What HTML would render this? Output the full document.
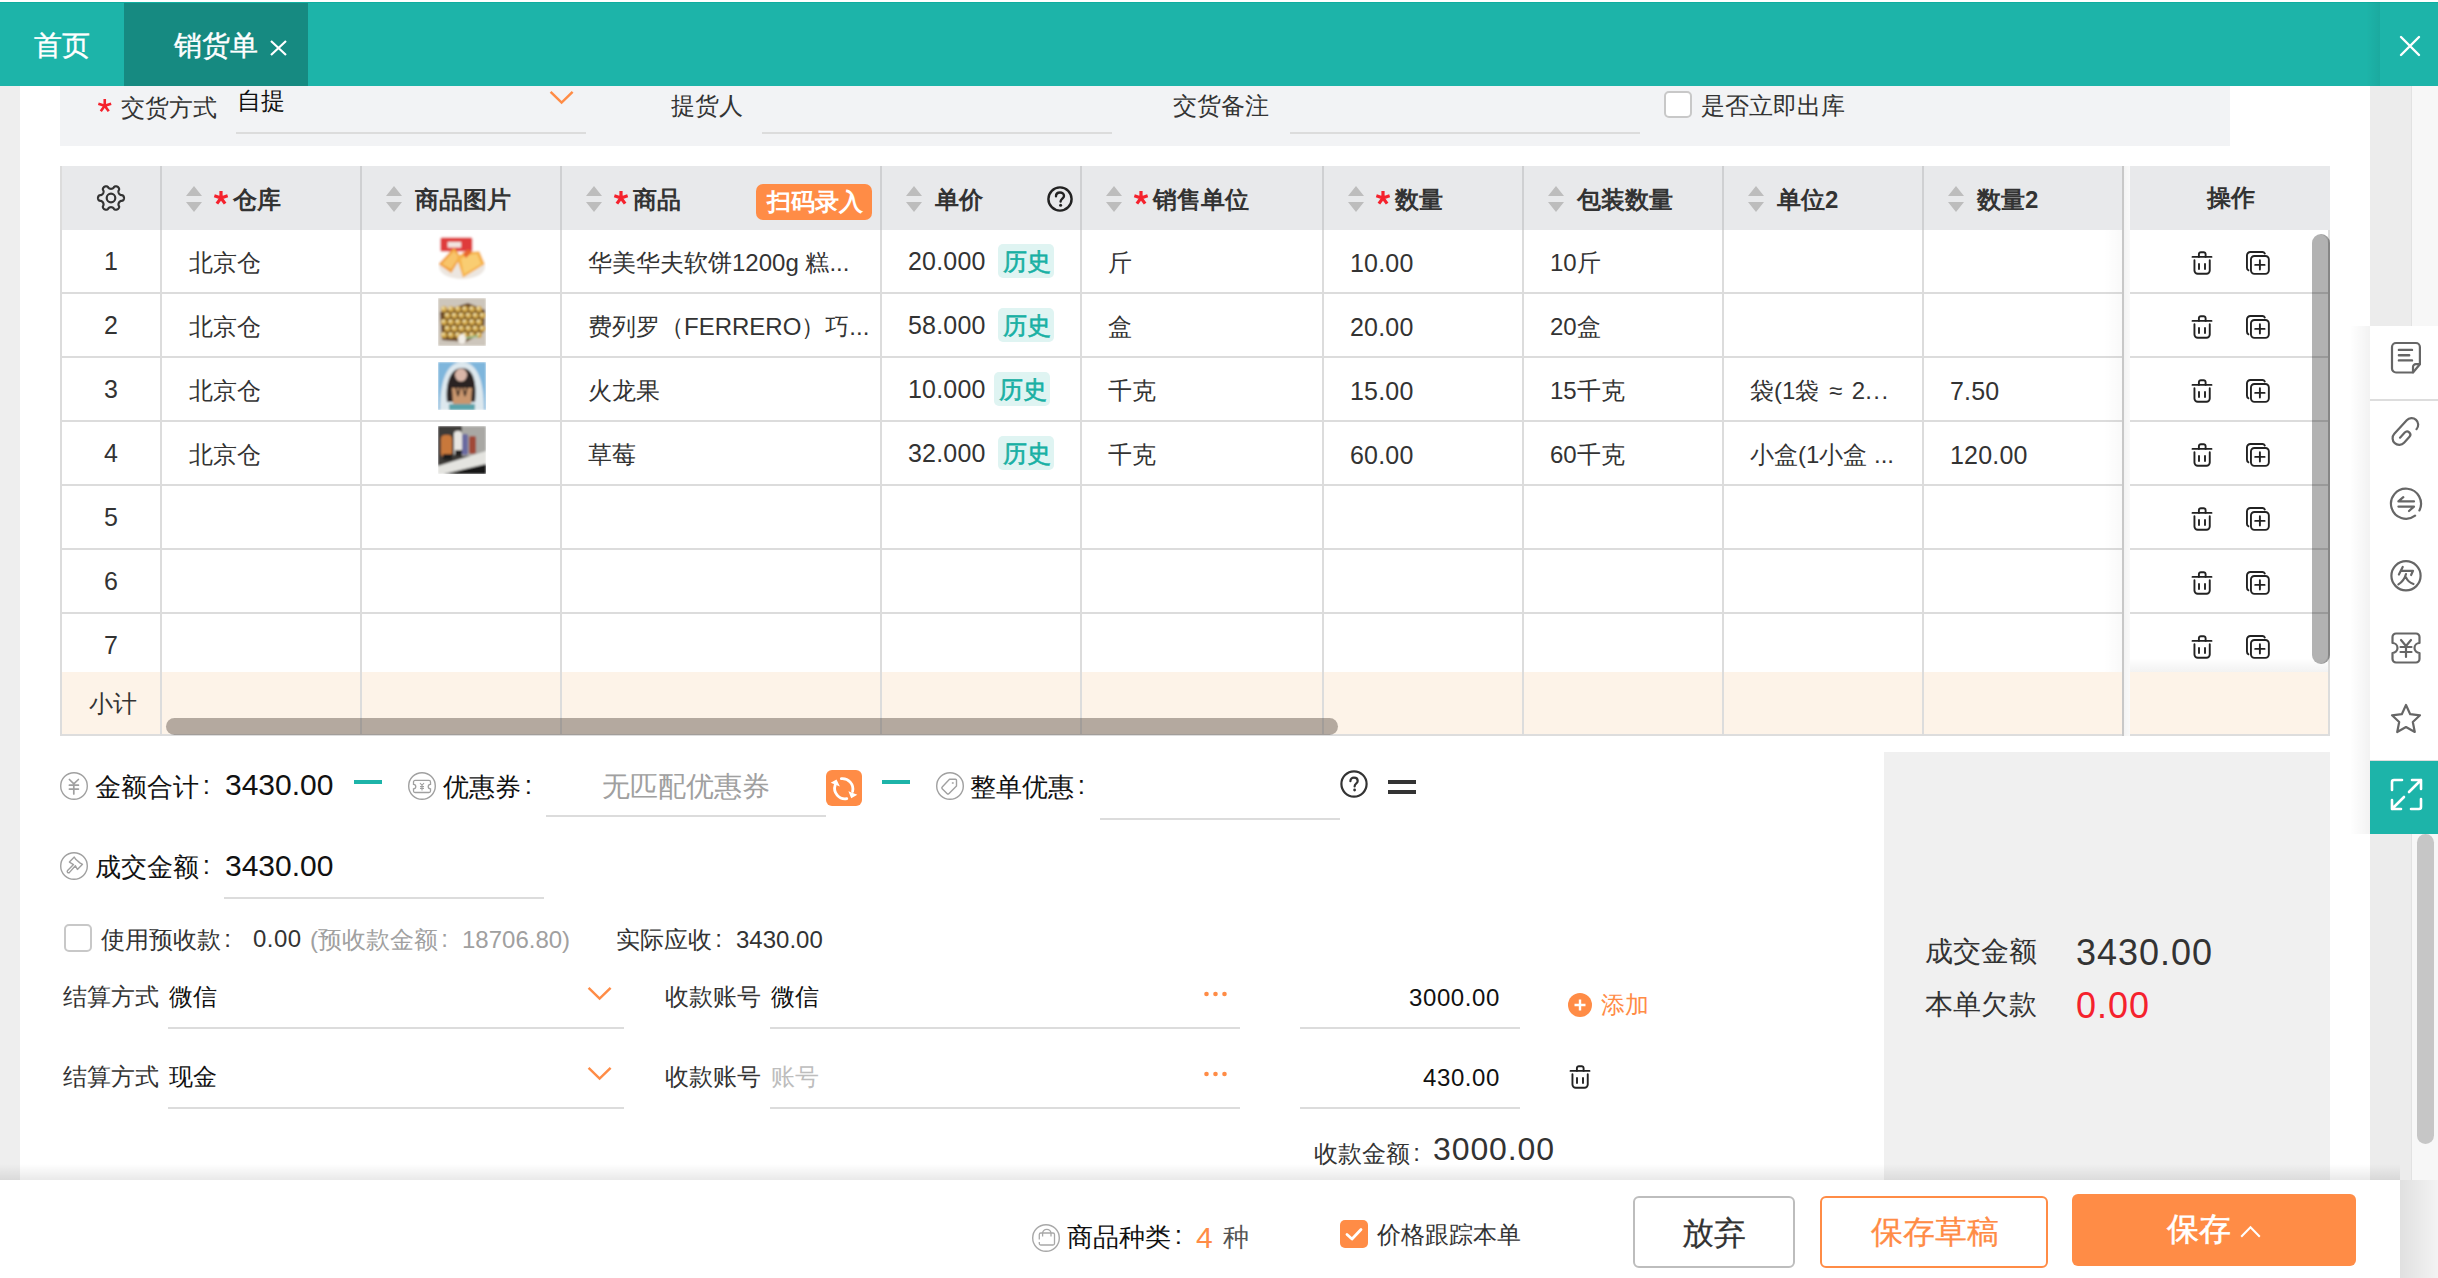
<!DOCTYPE html>
<html><head><meta charset="utf-8"><style>*{box-sizing:border-box;margin:0;padding:0}
html,body{width:2438px;height:1278px;overflow:hidden;background:#fff;font-family:"Liberation Sans",sans-serif;color:#333}
.a{position:absolute;white-space:nowrap}
svg.a{overflow:visible}
.cl{display:inline-block;width:1em;padding-left:0.14em;position:relative;top:-0.06em}
</style></head><body>
<div class="a" style="left:0px;top:0px;width:2438px;height:2px;background:#fff"></div>
<div class="a" style="left:0px;top:2px;width:2438px;height:1px;background:#0fae9f"></div>
<div class="a" style="left:0px;top:3px;width:2438px;height:83px;background:#1db4a9"></div>
<div class="a" style="left:124px;top:3px;width:184px;height:83px;background:#168a81"></div>
<div class="a" style="left:34px;top:32px;font-size:28px;line-height:28px;color:#fff;-webkit-text-stroke:0.4px #fff">首页</div>
<div class="a" style="left:174px;top:32px;font-size:28px;line-height:28px;color:#fff;-webkit-text-stroke:0.4px #fff">销货单</div>
<svg class="a" style="left:270px;top:40px;" width="17" height="16" viewBox="0 0 17 16"><path d="M1 1L16 15M16 1L1 15" stroke="#fff" stroke-width="2.2" fill="none"/></svg>
<div class="a" style="left:2366px;top:2px;width:14px;height:84px;background:linear-gradient(90deg,rgba(0,0,0,0),rgba(0,0,0,0.06))"></div>
<svg class="a" style="left:2400px;top:36px;" width="20" height="20" viewBox="0 0 20 20"><path d="M1 1L19 19M19 1L1 19" stroke="#fff" stroke-width="2.4" fill="none" stroke-linecap="round"/></svg>
<div class="a" style="left:0px;top:86px;width:20px;height:1192px;background:#eeeeee"></div>
<div class="a" style="left:60px;top:86px;width:2170px;height:60px;background:#f2f3f5"></div>
<svg class="a" style="left:98px;top:99px;" width="13.5" height="13.5" viewBox="0 0 13.5 13.5"><path d="M6.75 6.75L6.75 0.00M6.75 6.75L13.17 4.66M6.75 6.75L10.72 12.21M6.75 6.75L2.78 12.21M6.75 6.75L0.33 4.66" stroke="#f5222d" stroke-width="2.6" stroke-linecap="butt"/></svg>
<div class="a" style="left:121px;top:96px;font-size:24px;line-height:24px;color:#333">交货方式</div>
<div class="a" style="left:237px;top:89px;font-size:24px;line-height:24px;color:#111">自提</div>
<div class="a" style="left:236px;top:132px;width:350px;height:2px;background:#dcdcdc"></div>
<svg class="a" style="left:549px;top:90px;" width="26" height="15" viewBox="0 0 26 15"><path d="M1.6 1.8L12.6 12.6L23.6 1.8" stroke="#ff8c46" stroke-width="2.5" fill="none"/></svg>
<div class="a" style="left:671px;top:94px;font-size:24px;line-height:24px;color:#333">提货人</div>
<div class="a" style="left:762px;top:132px;width:350px;height:2px;background:#dcdcdc"></div>
<div class="a" style="left:1173px;top:94px;font-size:24px;line-height:24px;color:#333">交货备注</div>
<div class="a" style="left:1290px;top:132px;width:350px;height:2px;background:#dcdcdc"></div>
<div class="a" style="left:1664px;top:91px;width:28px;height:27px;background:#fff;border:2px solid #c8c8c8;border-radius:5px"></div>
<div class="a" style="left:1701px;top:94px;font-size:24px;line-height:24px;color:#333">是否立即出库</div>
<div class="a" style="left:60px;top:166px;width:2270px;height:64px;background:#e8e9eb"></div>
<div class="a" style="left:60px;top:230px;width:2270px;height:442px;background:#fff"></div>
<div class="a" style="left:60px;top:672px;width:2270px;height:62px;background:#fdf3e8"></div>
<div class="a" style="left:60px;top:734px;width:2270px;height:2px;background:#dddddd"></div>
<div class="a" style="left:60px;top:166px;width:2px;height:570px;background:#dcdcdc"></div>
<div class="a" style="left:2328px;top:230px;width:2px;height:506px;background:#dcdcdc"></div>
<div class="a" style="left:62px;top:292px;width:2060px;height:2px;background:#dcdcdc"></div>
<div class="a" style="left:2130px;top:292px;width:200px;height:2px;background:#dcdcdc"></div>
<div class="a" style="left:62px;top:356px;width:2060px;height:2px;background:#dcdcdc"></div>
<div class="a" style="left:2130px;top:356px;width:200px;height:2px;background:#dcdcdc"></div>
<div class="a" style="left:62px;top:420px;width:2060px;height:2px;background:#dcdcdc"></div>
<div class="a" style="left:2130px;top:420px;width:200px;height:2px;background:#dcdcdc"></div>
<div class="a" style="left:62px;top:484px;width:2060px;height:2px;background:#dcdcdc"></div>
<div class="a" style="left:2130px;top:484px;width:200px;height:2px;background:#dcdcdc"></div>
<div class="a" style="left:62px;top:548px;width:2060px;height:2px;background:#dcdcdc"></div>
<div class="a" style="left:2130px;top:548px;width:200px;height:2px;background:#dcdcdc"></div>
<div class="a" style="left:62px;top:612px;width:2060px;height:2px;background:#dcdcdc"></div>
<div class="a" style="left:2130px;top:612px;width:200px;height:2px;background:#dcdcdc"></div>
<div class="a" style="left:160px;top:166px;width:2px;height:64px;background:#cfd0d2"></div>
<div class="a" style="left:160px;top:230px;width:2px;height:506px;background:#dcdcdc"></div>
<div class="a" style="left:360px;top:166px;width:2px;height:64px;background:#cfd0d2"></div>
<div class="a" style="left:360px;top:230px;width:2px;height:506px;background:#dcdcdc"></div>
<div class="a" style="left:560px;top:166px;width:2px;height:64px;background:#cfd0d2"></div>
<div class="a" style="left:560px;top:230px;width:2px;height:506px;background:#dcdcdc"></div>
<div class="a" style="left:880px;top:166px;width:2px;height:64px;background:#cfd0d2"></div>
<div class="a" style="left:880px;top:230px;width:2px;height:506px;background:#dcdcdc"></div>
<div class="a" style="left:1080px;top:166px;width:2px;height:64px;background:#cfd0d2"></div>
<div class="a" style="left:1080px;top:230px;width:2px;height:506px;background:#dcdcdc"></div>
<div class="a" style="left:1322px;top:166px;width:2px;height:64px;background:#cfd0d2"></div>
<div class="a" style="left:1322px;top:230px;width:2px;height:506px;background:#dcdcdc"></div>
<div class="a" style="left:1522px;top:166px;width:2px;height:64px;background:#cfd0d2"></div>
<div class="a" style="left:1522px;top:230px;width:2px;height:506px;background:#dcdcdc"></div>
<div class="a" style="left:1722px;top:166px;width:2px;height:64px;background:#cfd0d2"></div>
<div class="a" style="left:1722px;top:230px;width:2px;height:506px;background:#dcdcdc"></div>
<div class="a" style="left:1922px;top:166px;width:2px;height:64px;background:#cfd0d2"></div>
<div class="a" style="left:1922px;top:230px;width:2px;height:506px;background:#dcdcdc"></div>
<div class="a" style="left:2122px;top:166px;width:2px;height:570px;background:#c8c8c8"></div>
<div class="a" style="left:2124px;top:166px;width:6px;height:570px;background:linear-gradient(90deg,#f3f3f3,#fafafa)"></div>
<div class="a" style="left:2104px;top:230px;width:18px;height:442px;background:linear-gradient(90deg,rgba(0,0,0,0),rgba(0,0,0,0.025))"></div>
<svg class="a" style="left:97px;top:184px;" width="28" height="28" viewBox="0 0 28 28"><path d="M27.00 14.00 L26.98 14.34 L26.94 14.68 L26.85 15.01 L26.74 15.34 L26.59 15.66 L26.40 15.96 L26.17 16.26 L25.89 16.53 L25.52 16.77 L24.72 16.87 L23.92 16.94 L23.55 17.10 L23.26 17.28 L23.00 17.46 L22.78 17.64 L22.58 17.82 L22.40 18.01 L22.24 18.20 L22.10 18.40 L21.97 18.60 L21.85 18.81 L21.76 19.04 L21.67 19.27 L21.60 19.52 L21.54 19.78 L21.49 20.07 L21.47 20.38 L21.46 20.72 L21.51 21.12 L21.85 21.85 L22.16 22.60 L22.13 23.03 L22.04 23.41 L21.90 23.76 L21.73 24.07 L21.53 24.36 L21.30 24.63 L21.05 24.86 L20.79 25.07 L20.50 25.26 L20.20 25.41 L19.88 25.54 L19.55 25.64 L19.21 25.70 L18.86 25.73 L18.50 25.72 L18.13 25.67 L17.76 25.56 L17.37 25.36 L16.87 24.72 L16.42 24.06 L16.09 23.82 L15.79 23.66 L15.51 23.52 L15.24 23.42 L14.98 23.34 L14.73 23.28 L14.48 23.23 L14.24 23.21 L14.00 23.20 L13.76 23.21 L13.52 23.23 L13.27 23.28 L13.02 23.34 L12.76 23.42 L12.49 23.52 L12.21 23.66 L11.91 23.82 L11.58 24.06 L11.13 24.72 L10.63 25.36 L10.24 25.56 L9.87 25.67 L9.50 25.72 L9.14 25.73 L8.79 25.70 L8.45 25.64 L8.12 25.54 L7.80 25.41 L7.50 25.26 L7.21 25.07 L6.95 24.86 L6.70 24.63 L6.47 24.36 L6.27 24.07 L6.10 23.76 L5.96 23.41 L5.87 23.03 L5.84 22.60 L6.15 21.85 L6.49 21.12 L6.54 20.72 L6.53 20.38 L6.51 20.07 L6.46 19.78 L6.40 19.52 L6.33 19.27 L6.24 19.04 L6.15 18.81 L6.03 18.60 L5.90 18.40 L5.76 18.20 L5.60 18.01 L5.42 17.82 L5.22 17.64 L5.00 17.46 L4.74 17.28 L4.45 17.10 L4.08 16.94 L3.28 16.87 L2.48 16.77 L2.11 16.53 L1.83 16.26 L1.60 15.96 L1.41 15.66 L1.26 15.34 L1.15 15.01 L1.06 14.68 L1.02 14.34 L1.00 14.00 L1.02 13.66 L1.06 13.32 L1.15 12.99 L1.26 12.66 L1.41 12.34 L1.60 12.04 L1.83 11.74 L2.11 11.47 L2.48 11.23 L3.28 11.13 L4.08 11.06 L4.45 10.90 L4.74 10.72 L5.00 10.54 L5.22 10.36 L5.42 10.18 L5.60 9.99 L5.76 9.80 L5.90 9.60 L6.03 9.40 L6.15 9.19 L6.24 8.96 L6.33 8.73 L6.40 8.48 L6.46 8.22 L6.51 7.93 L6.53 7.62 L6.54 7.28 L6.49 6.88 L6.15 6.15 L5.84 5.40 L5.87 4.97 L5.96 4.59 L6.10 4.24 L6.27 3.93 L6.47 3.64 L6.70 3.37 L6.95 3.14 L7.21 2.93 L7.50 2.74 L7.80 2.59 L8.12 2.46 L8.45 2.36 L8.79 2.30 L9.14 2.27 L9.50 2.28 L9.87 2.33 L10.24 2.44 L10.63 2.64 L11.13 3.28 L11.58 3.94 L11.91 4.18 L12.21 4.34 L12.49 4.48 L12.76 4.58 L13.02 4.66 L13.27 4.72 L13.52 4.77 L13.76 4.79 L14.00 4.80 L14.24 4.79 L14.48 4.77 L14.73 4.72 L14.98 4.66 L15.24 4.58 L15.51 4.48 L15.79 4.34 L16.09 4.18 L16.42 3.94 L16.87 3.28 L17.37 2.64 L17.76 2.44 L18.13 2.33 L18.50 2.28 L18.86 2.27 L19.21 2.30 L19.55 2.36 L19.88 2.46 L20.20 2.59 L20.50 2.74 L20.79 2.93 L21.05 3.14 L21.30 3.37 L21.53 3.64 L21.73 3.93 L21.90 4.24 L22.04 4.59 L22.13 4.97 L22.16 5.40 L21.85 6.15 L21.51 6.88 L21.46 7.28 L21.47 7.62 L21.49 7.93 L21.54 8.22 L21.60 8.48 L21.67 8.73 L21.76 8.96 L21.85 9.19 L21.97 9.40 L22.10 9.60 L22.24 9.80 L22.40 9.99 L22.58 10.18 L22.78 10.36 L23.00 10.54 L23.26 10.72 L23.55 10.90 L23.92 11.06 L24.72 11.13 L25.52 11.23 L25.89 11.47 L26.17 11.74 L26.40 12.04 L26.59 12.34 L26.74 12.66 L26.85 12.99 L26.94 13.32 L26.98 13.66 L27.00 14.00Z" stroke="#333" stroke-width="2.2" fill="none" stroke-linejoin="round"/><circle cx="14" cy="14" r="4.3" stroke="#333" stroke-width="2.2" fill="none"/></svg>
<svg class="a" style="left:186px;top:186px;" width="16" height="26" viewBox="0 0 16 26"><path d="M8 0L16 10H0Z M0 16H16L8 26Z" fill="#bdbdbd"/></svg>
<svg class="a" style="left:214px;top:191px;" width="14" height="14" viewBox="0 0 14 14"><path d="M7.00 7.00L7.00 0.00M7.00 7.00L13.66 4.84M7.00 7.00L11.11 12.66M7.00 7.00L2.89 12.66M7.00 7.00L0.34 4.84" stroke="#f5222d" stroke-width="3.2" stroke-linecap="butt"/></svg>
<div class="a" style="left:233px;top:188px;font-size:24px;line-height:24px;color:#333;font-weight:700">仓库</div>
<svg class="a" style="left:386px;top:186px;" width="16" height="26" viewBox="0 0 16 26"><path d="M8 0L16 10H0Z M0 16H16L8 26Z" fill="#bdbdbd"/></svg>
<div class="a" style="left:415px;top:188px;font-size:24px;line-height:24px;color:#333;font-weight:700">商品图片</div>
<svg class="a" style="left:586px;top:186px;" width="16" height="26" viewBox="0 0 16 26"><path d="M8 0L16 10H0Z M0 16H16L8 26Z" fill="#bdbdbd"/></svg>
<svg class="a" style="left:614px;top:191px;" width="14" height="14" viewBox="0 0 14 14"><path d="M7.00 7.00L7.00 0.00M7.00 7.00L13.66 4.84M7.00 7.00L11.11 12.66M7.00 7.00L2.89 12.66M7.00 7.00L0.34 4.84" stroke="#f5222d" stroke-width="3.2" stroke-linecap="butt"/></svg>
<div class="a" style="left:633px;top:188px;font-size:24px;line-height:24px;color:#333;font-weight:700">商品</div>
<div class="a" style="left:756px;top:184px;width:116px;height:36px;background:#ff8c46;border-radius:7px"></div>
<div class="a" style="left:767px;top:190px;font-size:24px;line-height:24px;color:#fff;font-weight:700">扫码录入</div>
<svg class="a" style="left:906px;top:186px;" width="16" height="26" viewBox="0 0 16 26"><path d="M8 0L16 10H0Z M0 16H16L8 26Z" fill="#bdbdbd"/></svg>
<div class="a" style="left:935px;top:188px;font-size:24px;line-height:24px;color:#333;font-weight:700">单价</div>
<svg class="a" style="left:1046px;top:186px;" width="28" height="28" viewBox="0 0 28 28"><circle cx="14" cy="13" r="11.6" stroke="#222" stroke-width="2.4" fill="none"/><path d="M10 10.2C10 7.8 11.8 6.5 14 6.5C16.2 6.5 18 7.9 18 10C18 12.6 14.6 12.8 14.6 15.6" stroke="#222" stroke-width="2.4" fill="none" stroke-linecap="round"/><circle cx="14.6" cy="19.3" r="1.5" fill="#222"/></svg>
<svg class="a" style="left:1106px;top:186px;" width="16" height="26" viewBox="0 0 16 26"><path d="M8 0L16 10H0Z M0 16H16L8 26Z" fill="#bdbdbd"/></svg>
<svg class="a" style="left:1134px;top:191px;" width="14" height="14" viewBox="0 0 14 14"><path d="M7.00 7.00L7.00 0.00M7.00 7.00L13.66 4.84M7.00 7.00L11.11 12.66M7.00 7.00L2.89 12.66M7.00 7.00L0.34 4.84" stroke="#f5222d" stroke-width="3.2" stroke-linecap="butt"/></svg>
<div class="a" style="left:1153px;top:188px;font-size:24px;line-height:24px;color:#333;font-weight:700">销售单位</div>
<svg class="a" style="left:1348px;top:186px;" width="16" height="26" viewBox="0 0 16 26"><path d="M8 0L16 10H0Z M0 16H16L8 26Z" fill="#bdbdbd"/></svg>
<svg class="a" style="left:1376px;top:191px;" width="14" height="14" viewBox="0 0 14 14"><path d="M7.00 7.00L7.00 0.00M7.00 7.00L13.66 4.84M7.00 7.00L11.11 12.66M7.00 7.00L2.89 12.66M7.00 7.00L0.34 4.84" stroke="#f5222d" stroke-width="3.2" stroke-linecap="butt"/></svg>
<div class="a" style="left:1395px;top:188px;font-size:24px;line-height:24px;color:#333;font-weight:700">数量</div>
<svg class="a" style="left:1548px;top:186px;" width="16" height="26" viewBox="0 0 16 26"><path d="M8 0L16 10H0Z M0 16H16L8 26Z" fill="#bdbdbd"/></svg>
<div class="a" style="left:1577px;top:188px;font-size:24px;line-height:24px;color:#333;font-weight:700">包装数量</div>
<svg class="a" style="left:1748px;top:186px;" width="16" height="26" viewBox="0 0 16 26"><path d="M8 0L16 10H0Z M0 16H16L8 26Z" fill="#bdbdbd"/></svg>
<div class="a" style="left:1777px;top:188px;font-size:24px;line-height:24px;color:#333;font-weight:700">单位2</div>
<svg class="a" style="left:1948px;top:186px;" width="16" height="26" viewBox="0 0 16 26"><path d="M8 0L16 10H0Z M0 16H16L8 26Z" fill="#bdbdbd"/></svg>
<div class="a" style="left:1977px;top:188px;font-size:24px;line-height:24px;color:#333;font-weight:700">数量2</div>
<div class="a" style="left:2207px;top:186px;font-size:24px;line-height:24px;color:#333;font-weight:700">操作</div>
<div class="a" style="left:62px;top:249px;font-size:25px;line-height:25px;color:#333;width:98px;text-align:center">1</div>
<svg class="a" style="left:2191px;top:250px;" width="22" height="26" viewBox="0 0 22 26"><g stroke="#222" stroke-width="1.9" fill="none" stroke-linecap="round"><path d="M1.5 6.9H20.5"/><path d="M7.9 6.9V4.2A2 2 0 0 1 9.9 2.2H12.6A2 2 0 0 1 14.6 4.2V6.9"/><path d="M3.45 10.3V20.5A3.25 3.25 0 0 0 6.7 23.75H15.5A3.25 3.25 0 0 0 18.75 20.5V10.3"/><path d="M8 13.9V19.1M14 13.9V19.1"/></g></svg>
<svg class="a" style="left:2245px;top:249px;" width="26" height="26" viewBox="0 0 26 26"><g stroke="#222" stroke-width="1.9" fill="none" stroke-linecap="round"><path d="M19.8 4.4A3 3 0 0 0 17.5 2.95H5.5A3.5 3.5 0 0 0 1.95 6.5V18.5A3 3 0 0 0 3.4 21.2"/><rect x="5.95" y="6.95" width="17.9" height="17.9" rx="3.5"/><path d="M14.9 11.2V20.6M10.2 15.9H19.6"/></g></svg>
<div class="a" style="left:62px;top:313px;font-size:25px;line-height:25px;color:#333;width:98px;text-align:center">2</div>
<svg class="a" style="left:2191px;top:314px;" width="22" height="26" viewBox="0 0 22 26"><g stroke="#222" stroke-width="1.9" fill="none" stroke-linecap="round"><path d="M1.5 6.9H20.5"/><path d="M7.9 6.9V4.2A2 2 0 0 1 9.9 2.2H12.6A2 2 0 0 1 14.6 4.2V6.9"/><path d="M3.45 10.3V20.5A3.25 3.25 0 0 0 6.7 23.75H15.5A3.25 3.25 0 0 0 18.75 20.5V10.3"/><path d="M8 13.9V19.1M14 13.9V19.1"/></g></svg>
<svg class="a" style="left:2245px;top:313px;" width="26" height="26" viewBox="0 0 26 26"><g stroke="#222" stroke-width="1.9" fill="none" stroke-linecap="round"><path d="M19.8 4.4A3 3 0 0 0 17.5 2.95H5.5A3.5 3.5 0 0 0 1.95 6.5V18.5A3 3 0 0 0 3.4 21.2"/><rect x="5.95" y="6.95" width="17.9" height="17.9" rx="3.5"/><path d="M14.9 11.2V20.6M10.2 15.9H19.6"/></g></svg>
<div class="a" style="left:62px;top:377px;font-size:25px;line-height:25px;color:#333;width:98px;text-align:center">3</div>
<svg class="a" style="left:2191px;top:378px;" width="22" height="26" viewBox="0 0 22 26"><g stroke="#222" stroke-width="1.9" fill="none" stroke-linecap="round"><path d="M1.5 6.9H20.5"/><path d="M7.9 6.9V4.2A2 2 0 0 1 9.9 2.2H12.6A2 2 0 0 1 14.6 4.2V6.9"/><path d="M3.45 10.3V20.5A3.25 3.25 0 0 0 6.7 23.75H15.5A3.25 3.25 0 0 0 18.75 20.5V10.3"/><path d="M8 13.9V19.1M14 13.9V19.1"/></g></svg>
<svg class="a" style="left:2245px;top:377px;" width="26" height="26" viewBox="0 0 26 26"><g stroke="#222" stroke-width="1.9" fill="none" stroke-linecap="round"><path d="M19.8 4.4A3 3 0 0 0 17.5 2.95H5.5A3.5 3.5 0 0 0 1.95 6.5V18.5A3 3 0 0 0 3.4 21.2"/><rect x="5.95" y="6.95" width="17.9" height="17.9" rx="3.5"/><path d="M14.9 11.2V20.6M10.2 15.9H19.6"/></g></svg>
<div class="a" style="left:62px;top:441px;font-size:25px;line-height:25px;color:#333;width:98px;text-align:center">4</div>
<svg class="a" style="left:2191px;top:442px;" width="22" height="26" viewBox="0 0 22 26"><g stroke="#222" stroke-width="1.9" fill="none" stroke-linecap="round"><path d="M1.5 6.9H20.5"/><path d="M7.9 6.9V4.2A2 2 0 0 1 9.9 2.2H12.6A2 2 0 0 1 14.6 4.2V6.9"/><path d="M3.45 10.3V20.5A3.25 3.25 0 0 0 6.7 23.75H15.5A3.25 3.25 0 0 0 18.75 20.5V10.3"/><path d="M8 13.9V19.1M14 13.9V19.1"/></g></svg>
<svg class="a" style="left:2245px;top:441px;" width="26" height="26" viewBox="0 0 26 26"><g stroke="#222" stroke-width="1.9" fill="none" stroke-linecap="round"><path d="M19.8 4.4A3 3 0 0 0 17.5 2.95H5.5A3.5 3.5 0 0 0 1.95 6.5V18.5A3 3 0 0 0 3.4 21.2"/><rect x="5.95" y="6.95" width="17.9" height="17.9" rx="3.5"/><path d="M14.9 11.2V20.6M10.2 15.9H19.6"/></g></svg>
<div class="a" style="left:62px;top:505px;font-size:25px;line-height:25px;color:#333;width:98px;text-align:center">5</div>
<svg class="a" style="left:2191px;top:506px;" width="22" height="26" viewBox="0 0 22 26"><g stroke="#222" stroke-width="1.9" fill="none" stroke-linecap="round"><path d="M1.5 6.9H20.5"/><path d="M7.9 6.9V4.2A2 2 0 0 1 9.9 2.2H12.6A2 2 0 0 1 14.6 4.2V6.9"/><path d="M3.45 10.3V20.5A3.25 3.25 0 0 0 6.7 23.75H15.5A3.25 3.25 0 0 0 18.75 20.5V10.3"/><path d="M8 13.9V19.1M14 13.9V19.1"/></g></svg>
<svg class="a" style="left:2245px;top:505px;" width="26" height="26" viewBox="0 0 26 26"><g stroke="#222" stroke-width="1.9" fill="none" stroke-linecap="round"><path d="M19.8 4.4A3 3 0 0 0 17.5 2.95H5.5A3.5 3.5 0 0 0 1.95 6.5V18.5A3 3 0 0 0 3.4 21.2"/><rect x="5.95" y="6.95" width="17.9" height="17.9" rx="3.5"/><path d="M14.9 11.2V20.6M10.2 15.9H19.6"/></g></svg>
<div class="a" style="left:62px;top:569px;font-size:25px;line-height:25px;color:#333;width:98px;text-align:center">6</div>
<svg class="a" style="left:2191px;top:570px;" width="22" height="26" viewBox="0 0 22 26"><g stroke="#222" stroke-width="1.9" fill="none" stroke-linecap="round"><path d="M1.5 6.9H20.5"/><path d="M7.9 6.9V4.2A2 2 0 0 1 9.9 2.2H12.6A2 2 0 0 1 14.6 4.2V6.9"/><path d="M3.45 10.3V20.5A3.25 3.25 0 0 0 6.7 23.75H15.5A3.25 3.25 0 0 0 18.75 20.5V10.3"/><path d="M8 13.9V19.1M14 13.9V19.1"/></g></svg>
<svg class="a" style="left:2245px;top:569px;" width="26" height="26" viewBox="0 0 26 26"><g stroke="#222" stroke-width="1.9" fill="none" stroke-linecap="round"><path d="M19.8 4.4A3 3 0 0 0 17.5 2.95H5.5A3.5 3.5 0 0 0 1.95 6.5V18.5A3 3 0 0 0 3.4 21.2"/><rect x="5.95" y="6.95" width="17.9" height="17.9" rx="3.5"/><path d="M14.9 11.2V20.6M10.2 15.9H19.6"/></g></svg>
<div class="a" style="left:62px;top:633px;font-size:25px;line-height:25px;color:#333;width:98px;text-align:center">7</div>
<svg class="a" style="left:2191px;top:634px;" width="22" height="26" viewBox="0 0 22 26"><g stroke="#222" stroke-width="1.9" fill="none" stroke-linecap="round"><path d="M1.5 6.9H20.5"/><path d="M7.9 6.9V4.2A2 2 0 0 1 9.9 2.2H12.6A2 2 0 0 1 14.6 4.2V6.9"/><path d="M3.45 10.3V20.5A3.25 3.25 0 0 0 6.7 23.75H15.5A3.25 3.25 0 0 0 18.75 20.5V10.3"/><path d="M8 13.9V19.1M14 13.9V19.1"/></g></svg>
<svg class="a" style="left:2245px;top:633px;" width="26" height="26" viewBox="0 0 26 26"><g stroke="#222" stroke-width="1.9" fill="none" stroke-linecap="round"><path d="M19.8 4.4A3 3 0 0 0 17.5 2.95H5.5A3.5 3.5 0 0 0 1.95 6.5V18.5A3 3 0 0 0 3.4 21.2"/><rect x="5.95" y="6.95" width="17.9" height="17.9" rx="3.5"/><path d="M14.9 11.2V20.6M10.2 15.9H19.6"/></g></svg>
<div class="a" style="left:189px;top:251px;font-size:24px;line-height:24px;color:#333">北京仓</div>
<svg class="a" style="left:438px;top:234px;" width="48" height="48" viewBox="0 0 48 48"><defs><filter id="bl1" x="-10%" y="-10%" width="120%" height="120%"><feGaussianBlur stdDeviation="0.9"/></filter><clipPath id="cp1"><rect width="48" height="48"/></clipPath></defs><g clip-path="url(#cp1)"><g filter="url(#bl1)"><rect width="48" height="48" fill="#fff"/><ellipse cx="24" cy="33" rx="23" ry="12" fill="#ece6e0"/><rect x="2.4" y="3.6" width="32" height="14" rx="1.5" fill="#df3b3b"/><rect x="9.6" y="8" width="13.6" height="5.6" fill="#f2e4e0"/><path d="M0.5 30L16 13.6L23 22.7L13.3 39Z" fill="#f2a23c"/><path d="M4 30L16 17L21 23L13 35Z" fill="#f8c46a"/><path d="M18.7 23.6L26 18L41.4 17.2L46.8 30L25 43.6Z" fill="#f6b24c"/><path d="M23 25L29 21L39 20L43 30L26 40Z" fill="#f9cd72"/><path d="M25 20L30 15L34 18L28 24Z" fill="#e8652e"/></g></g></svg>
<div class="a" style="left:588px;top:251px;font-size:24px;line-height:24px;color:#333">华美华夫软饼1200g 糕...</div>
<div class="a" style="left:908px;top:249px;font-size:25px;line-height:25px;color:#333;letter-spacing:0.2px">20.000</div>
<div class="a" style="left:998px;top:244px;width:56px;height:34px;background:#dff4f2;border-radius:5px"></div>
<div class="a" style="left:1003px;top:250px;font-size:24px;line-height:24px;color:#18b0a4;-webkit-text-stroke:0.6px #18b0a4">历史</div>
<div class="a" style="left:1108px;top:251px;font-size:24px;line-height:24px;color:#333">斤</div>
<div class="a" style="left:1350px;top:250.5px;font-size:25px;line-height:25px;color:#333;letter-spacing:0.2px">10.00</div>
<div class="a" style="left:1550px;top:251px;font-size:24px;line-height:24px;color:#333">10斤</div>
<div class="a" style="left:189px;top:315px;font-size:24px;line-height:24px;color:#333">北京仓</div>
<svg class="a" style="left:438px;top:298px;" width="48" height="48" viewBox="0 0 48 48"><defs><filter id="bl2" x="-10%" y="-10%" width="120%" height="120%"><feGaussianBlur stdDeviation="0.9"/></filter><clipPath id="cp2"><rect width="48" height="48"/></clipPath></defs><g clip-path="url(#cp2)"><g filter="url(#bl2)"><rect width="48" height="48" fill="#cdc6bc"/><path d="M2 14L30 5L47 12L46 34L28 44L4 42Z" fill="#6b4a26"/><circle cx="6.0" cy="11.0" r="3.1" fill="#cfa546"/><circle cx="5.2" cy="10.1" r="1.4" fill="#f4e6b0"/><circle cx="13.0" cy="11.0" r="3.1" fill="#cfa546"/><circle cx="12.2" cy="10.1" r="1.4" fill="#f4e6b0"/><circle cx="20.0" cy="11.0" r="3.1" fill="#cfa546"/><circle cx="19.2" cy="10.1" r="1.4" fill="#f4e6b0"/><circle cx="27.0" cy="11.0" r="3.1" fill="#cfa546"/><circle cx="26.2" cy="10.1" r="1.4" fill="#f4e6b0"/><circle cx="34.0" cy="11.0" r="3.1" fill="#cfa546"/><circle cx="33.2" cy="10.1" r="1.4" fill="#f4e6b0"/><circle cx="41.0" cy="11.0" r="3.1" fill="#cfa546"/><circle cx="40.2" cy="10.1" r="1.4" fill="#f4e6b0"/><circle cx="9.5" cy="17.5" r="3.1" fill="#cfa546"/><circle cx="8.7" cy="16.6" r="1.4" fill="#f4e6b0"/><circle cx="16.5" cy="17.5" r="3.1" fill="#cfa546"/><circle cx="15.7" cy="16.6" r="1.4" fill="#f4e6b0"/><circle cx="23.5" cy="17.5" r="3.1" fill="#cfa546"/><circle cx="22.7" cy="16.6" r="1.4" fill="#f4e6b0"/><circle cx="30.5" cy="17.5" r="3.1" fill="#cfa546"/><circle cx="29.7" cy="16.6" r="1.4" fill="#f4e6b0"/><circle cx="37.5" cy="17.5" r="3.1" fill="#cfa546"/><circle cx="36.7" cy="16.6" r="1.4" fill="#f4e6b0"/><circle cx="44.5" cy="17.5" r="3.1" fill="#cfa546"/><circle cx="43.7" cy="16.6" r="1.4" fill="#f4e6b0"/><circle cx="6.0" cy="24.0" r="3.1" fill="#cfa546"/><circle cx="5.2" cy="23.1" r="1.4" fill="#f4e6b0"/><circle cx="13.0" cy="24.0" r="3.1" fill="#cfa546"/><circle cx="12.2" cy="23.1" r="1.4" fill="#f4e6b0"/><circle cx="20.0" cy="24.0" r="3.1" fill="#cfa546"/><circle cx="19.2" cy="23.1" r="1.4" fill="#f4e6b0"/><circle cx="27.0" cy="24.0" r="3.1" fill="#cfa546"/><circle cx="26.2" cy="23.1" r="1.4" fill="#f4e6b0"/><circle cx="34.0" cy="24.0" r="3.1" fill="#cfa546"/><circle cx="33.2" cy="23.1" r="1.4" fill="#f4e6b0"/><circle cx="41.0" cy="24.0" r="3.1" fill="#cfa546"/><circle cx="40.2" cy="23.1" r="1.4" fill="#f4e6b0"/><circle cx="9.5" cy="30.5" r="3.1" fill="#cfa546"/><circle cx="8.7" cy="29.6" r="1.4" fill="#f4e6b0"/><circle cx="16.5" cy="30.5" r="3.1" fill="#cfa546"/><circle cx="15.7" cy="29.6" r="1.4" fill="#f4e6b0"/><circle cx="23.5" cy="30.5" r="3.1" fill="#cfa546"/><circle cx="22.7" cy="29.6" r="1.4" fill="#f4e6b0"/><circle cx="30.5" cy="30.5" r="3.1" fill="#cfa546"/><circle cx="29.7" cy="29.6" r="1.4" fill="#f4e6b0"/><circle cx="37.5" cy="30.5" r="3.1" fill="#cfa546"/><circle cx="36.7" cy="29.6" r="1.4" fill="#f4e6b0"/><circle cx="44.5" cy="30.5" r="3.1" fill="#cfa546"/><circle cx="43.7" cy="29.6" r="1.4" fill="#f4e6b0"/><circle cx="6.0" cy="37.0" r="3.1" fill="#cfa546"/><circle cx="5.2" cy="36.1" r="1.4" fill="#f4e6b0"/><circle cx="13.0" cy="37.0" r="3.1" fill="#cfa546"/><circle cx="12.2" cy="36.1" r="1.4" fill="#f4e6b0"/><circle cx="20.0" cy="37.0" r="3.1" fill="#cfa546"/><circle cx="19.2" cy="36.1" r="1.4" fill="#f4e6b0"/><circle cx="27.0" cy="37.0" r="3.1" fill="#cfa546"/><circle cx="26.2" cy="36.1" r="1.4" fill="#f4e6b0"/><circle cx="34.0" cy="37.0" r="3.1" fill="#cfa546"/><circle cx="33.2" cy="36.1" r="1.4" fill="#f4e6b0"/><circle cx="41.0" cy="37.0" r="3.1" fill="#cfa546"/><circle cx="40.2" cy="36.1" r="1.4" fill="#f4e6b0"/><ellipse cx="24" cy="41" rx="4" ry="5" fill="#f3efe8"/><path d="M28 40L40 38" stroke="#9cc08a" stroke-width="2"/></g></g></svg>
<div class="a" style="left:588px;top:315px;font-size:24px;line-height:24px;color:#333">费列罗（FERRERO）巧...</div>
<div class="a" style="left:908px;top:313px;font-size:25px;line-height:25px;color:#333;letter-spacing:0.2px">58.000</div>
<div class="a" style="left:998px;top:308px;width:56px;height:34px;background:#dff4f2;border-radius:5px"></div>
<div class="a" style="left:1003px;top:314px;font-size:24px;line-height:24px;color:#18b0a4;-webkit-text-stroke:0.6px #18b0a4">历史</div>
<div class="a" style="left:1108px;top:315px;font-size:24px;line-height:24px;color:#333">盒</div>
<div class="a" style="left:1350px;top:314.5px;font-size:25px;line-height:25px;color:#333;letter-spacing:0.2px">20.00</div>
<div class="a" style="left:1550px;top:315px;font-size:24px;line-height:24px;color:#333">20盒</div>
<div class="a" style="left:189px;top:379px;font-size:24px;line-height:24px;color:#333">北京仓</div>
<svg class="a" style="left:438px;top:362px;" width="48" height="48" viewBox="0 0 48 48"><defs><filter id="bl3" x="-10%" y="-10%" width="120%" height="120%"><feGaussianBlur stdDeviation="0.9"/></filter><clipPath id="cp3"><rect width="48" height="48"/></clipPath></defs><g clip-path="url(#cp3)"><g filter="url(#bl3)"><rect width="48" height="48" fill="#7fb6dc"/><path d="M2 48C2 16 10 0 24 0C38 0 46 16 46 48Z" fill="#dde8ee"/><path d="M9 40C7 22 12 6 24 6C36 6 39 22 37 40Z" fill="#2b2220"/><ellipse cx="23" cy="13" rx="6" ry="6.5" fill="#d9b6a8"/><path d="M14 26H34L33 42H15Z" fill="#c9966e"/><path d="M18 26L20 34L22 26M25 26L27 34L29 26" stroke="#3a2a24" stroke-width="1.5" fill="none"/><rect x="11" y="42" width="26" height="6" fill="#5aa3aa"/></g></g></svg>
<div class="a" style="left:588px;top:379px;font-size:24px;line-height:24px;color:#333">火龙果</div>
<div class="a" style="left:908px;top:377px;font-size:25px;line-height:25px;color:#333;letter-spacing:0.2px">10.000</div>
<div class="a" style="left:994px;top:372px;width:56px;height:34px;background:#dff4f2;border-radius:5px"></div>
<div class="a" style="left:999px;top:378px;font-size:24px;line-height:24px;color:#18b0a4;-webkit-text-stroke:0.6px #18b0a4">历史</div>
<div class="a" style="left:1108px;top:379px;font-size:24px;line-height:24px;color:#333">千克</div>
<div class="a" style="left:1350px;top:378.5px;font-size:25px;line-height:25px;color:#333;letter-spacing:0.2px">15.00</div>
<div class="a" style="left:1550px;top:379px;font-size:24px;line-height:24px;color:#333">15千克</div>
<div class="a" style="left:1750px;top:379px;font-size:24px;line-height:24px;color:#333">袋(1袋 <span style="padding:0 3px">≈</span> 2<span style="letter-spacing:1.5px">...</span></div>
<div class="a" style="left:1950px;top:379px;font-size:25px;line-height:25px;color:#333;letter-spacing:0.2px">7.50</div>
<div class="a" style="left:189px;top:443px;font-size:24px;line-height:24px;color:#333">北京仓</div>
<svg class="a" style="left:438px;top:426px;" width="48" height="48" viewBox="0 0 48 48"><defs><filter id="bl4" x="-10%" y="-10%" width="120%" height="120%"><feGaussianBlur stdDeviation="0.9"/></filter><clipPath id="cp4"><rect width="48" height="48"/></clipPath></defs><g clip-path="url(#cp4)"><g filter="url(#bl4)"><rect width="48" height="48" fill="#3c3a38"/><rect x="24" y="0" width="24" height="30" fill="#a9a8a4"/><path d="M0 40L48 25V48H0Z" fill="#e4e4e0"/><path d="M6 48L48 38V48Z" fill="#161616"/><rect x="3" y="9" width="11" height="22" rx="4" fill="#c8783a"/><rect x="5" y="28" width="9" height="6" fill="#1e1e1e"/><rect x="16" y="5" width="8" height="25" rx="3" fill="#e8e6e2"/><rect x="17" y="24" width="7" height="6" fill="#222"/><rect x="24" y="8" width="6" height="21" rx="2" fill="#6a6aa0"/><rect x="31" y="10" width="7" height="18" rx="2" fill="#a04838"/></g></g></svg>
<div class="a" style="left:588px;top:443px;font-size:24px;line-height:24px;color:#333">草莓</div>
<div class="a" style="left:908px;top:441px;font-size:25px;line-height:25px;color:#333;letter-spacing:0.2px">32.000</div>
<div class="a" style="left:998px;top:436px;width:56px;height:34px;background:#dff4f2;border-radius:5px"></div>
<div class="a" style="left:1003px;top:442px;font-size:24px;line-height:24px;color:#18b0a4;-webkit-text-stroke:0.6px #18b0a4">历史</div>
<div class="a" style="left:1108px;top:443px;font-size:24px;line-height:24px;color:#333">千克</div>
<div class="a" style="left:1350px;top:442.5px;font-size:25px;line-height:25px;color:#333;letter-spacing:0.2px">60.00</div>
<div class="a" style="left:1550px;top:443px;font-size:24px;line-height:24px;color:#333">60千克</div>
<div class="a" style="left:1750px;top:443px;font-size:24px;line-height:24px;color:#333">小盒(1小盒 ...</div>
<div class="a" style="left:1950px;top:443px;font-size:25px;line-height:25px;color:#333;letter-spacing:0.2px">120.00</div>
<div class="a" style="left:89px;top:692px;font-size:24px;line-height:24px;color:#333">小计</div>
<div class="a" style="left:2312px;top:234px;width:18px;height:430px;background:rgba(0,0,0,0.3);border-radius:9px;box-shadow:inset -2px 0 0 rgba(0,0,0,0.12)"></div>
<div class="a" style="left:2130px;top:658px;width:198px;height:14px;background:linear-gradient(180deg,rgba(0,0,0,0),rgba(0,0,0,0.05))"></div>
<div class="a" style="left:166px;top:718px;width:1172px;height:17px;background:rgba(90,80,70,0.45);border-radius:9px"></div>
<svg class="a" style="left:60px;top:772px;" width="28" height="28" viewBox="0 0 28 28"><circle cx="14.0" cy="14.0" r="13.3" stroke="#a0a0a0" stroke-width="1.4" fill="none"/><g stroke="#a0a0a0" stroke-width="1.7" fill="none" stroke-linecap="round"><path d="M9.4 7.5L13.8 11.8L18.4 7.5M9.4 13.2H18.4M9.4 17.1H18.4M13.8 11.8V22"/></g></svg>
<div class="a" style="left:95px;top:774px;font-size:26px;line-height:26px;color:#111">金额合计<span class="cl">:</span></div>
<div class="a" style="left:225px;top:770px;font-size:30px;line-height:30px;color:#111">3430.00</div>
<div class="a" style="left:354px;top:780px;width:28px;height:4px;background:#1db4a9"></div>
<svg class="a" style="left:408px;top:772px;" width="28" height="28" viewBox="0 0 28 28"><circle cx="14.0" cy="14.0" r="13.3" stroke="#a0a0a0" stroke-width="1.4" fill="none"/><path d="M7 8.4H21A1.5 1.5 0 0 1 22.5 9.9V12.3A2.3 2.3 0 0 0 22.5 16.9V19A1.5 1.5 0 0 1 21 20.5H7A1.5 1.5 0 0 1 5.5 19V16.9A2.3 2.3 0 0 0 5.5 12.3V9.9A1.5 1.5 0 0 1 7 8.4Z" stroke="#a0a0a0" stroke-width="1.3" fill="none"/><g stroke="#a0a0a0" stroke-width="1.1" fill="none"><path d="M12 11L14 13.3L16 11M12 14.6H16M12 16.5H16M14 13.3V18.5"/></g></svg>
<div class="a" style="left:443px;top:774px;font-size:26px;line-height:26px;color:#111">优惠券<span class="cl">:</span></div>
<div class="a" style="left:602px;top:773px;font-size:28px;line-height:28px;color:#a0a0a0">无匹配优惠券</div>
<div class="a" style="left:546px;top:815px;width:280px;height:2px;background:#dcdcdc"></div>
<div class="a" style="left:826px;top:770px;width:36px;height:36px;background:#ff8c46;border-radius:6px"></div>
<svg class="a" style="left:826px;top:770px;" width="36" height="36" viewBox="0 0 36 36"><g stroke="#fff" stroke-width="2.8" fill="none" stroke-linecap="round"><path d="M15.3 8.7A10.5 10.5 0 0 1 26.6 21.5"/><path d="M20.8 28.7A10.5 10.5 0 0 1 9.2 15"/></g><path d="M22.4 21.2L31.3 24.8L25.2 28.3Z M4.7 12.8L13.9 16.6L10.5 9.6Z" fill="#fff"/></svg>
<div class="a" style="left:882px;top:780px;width:28px;height:4px;background:#1db4a9"></div>
<svg class="a" style="left:936px;top:772px;" width="28" height="28" viewBox="0 0 28 28"><circle cx="14.0" cy="14.0" r="13.3" stroke="#a0a0a0" stroke-width="1.4" fill="none"/><path d="M13.5 7.3H19.5A1 1 0 0 1 20.5 8.3V14L12.8 21.7A1.2 1.2 0 0 1 11.2 21.7L6.2 16.7A1.2 1.2 0 0 1 6.2 15Z" stroke="#a0a0a0" stroke-width="1.4" fill="none" stroke-linejoin="round"/><circle cx="16.8" cy="11" r="1.1" fill="#b0b0b0"/></svg>
<div class="a" style="left:970px;top:774px;font-size:26px;line-height:26px;color:#111">整单优惠<span class="cl">:</span></div>
<div class="a" style="left:1100px;top:818px;width:240px;height:2px;background:#dcdcdc"></div>
<svg class="a" style="left:1340px;top:770px;" width="28" height="28" viewBox="0 0 28 28"><circle cx="14" cy="14" r="12.6" stroke="#333" stroke-width="2.2" fill="none"/><path d="M10.4 11.2C10.4 8.9 12 7.6 14 7.6C16.1 7.6 17.7 9 17.7 10.9C17.7 13.4 14.6 13.7 14.6 16.4" stroke="#333" stroke-width="2.2" fill="none" stroke-linecap="round"/><circle cx="14.6" cy="20" r="1.4" fill="#333"/></svg>
<div class="a" style="left:1388px;top:780px;width:28px;height:4px;background:#333"></div>
<div class="a" style="left:1388px;top:790px;width:28px;height:4px;background:#333"></div>
<svg class="a" style="left:60px;top:852px;" width="28" height="28" viewBox="0 0 28 28"><circle cx="14.0" cy="14.0" r="13.3" stroke="#a0a0a0" stroke-width="1.4" fill="none"/><path d="M14.3 5L9.4 10.1L13.5 12.6L7.6 18.6A1.2 1.2 0 0 0 9.5 20.4L15.4 13.8L17.4 17.4L22.5 12.3L19.9 10.9L15.7 7.3Z" stroke="#a0a0a0" stroke-width="1.4" fill="none" stroke-linejoin="round"/></svg>
<div class="a" style="left:95px;top:854px;font-size:26px;line-height:26px;color:#111">成交金额<span class="cl">:</span></div>
<div class="a" style="left:225px;top:851px;font-size:30px;line-height:30px;color:#111">3430.00</div>
<div class="a" style="left:224px;top:897px;width:320px;height:2px;background:#dcdcdc"></div>
<div class="a" style="left:64px;top:924px;width:28px;height:28px;background:#fff;border:2px solid #c8c8c8;border-radius:5px"></div>
<div class="a" style="left:101px;top:928px;font-size:24px;line-height:24px;color:#333">使用预收款<span class="cl">:</span></div>
<div class="a" style="left:253px;top:927px;font-size:24px;line-height:24px;color:#333;letter-spacing:0.5px">0.00</div>
<div class="a" style="left:310px;top:928px;font-size:24px;line-height:24px;color:#a0a0a0">(预收款金额<span class="cl">:</span>18706.80)</div>
<div class="a" style="left:616px;top:928px;font-size:24px;line-height:24px;color:#333">实际应收<span class="cl">:</span>3430.00</div>
<div class="a" style="left:63px;top:985px;font-size:24px;line-height:24px;color:#333">结算方式</div>
<div class="a" style="left:169px;top:985px;font-size:24px;line-height:24px;color:#111">微信</div>
<svg class="a" style="left:587px;top:986px;" width="26" height="15" viewBox="0 0 26 15"><path d="M1.6 1.8L12.6 12.6L23.6 1.8" stroke="#ff8c46" stroke-width="2.5" fill="none"/></svg>
<div class="a" style="left:168px;top:1027px;width:456px;height:2px;background:#dcdcdc"></div>
<div class="a" style="left:665px;top:985px;font-size:24px;line-height:24px;color:#333">收款账号</div>
<div class="a" style="left:771px;top:985px;font-size:24px;line-height:24px;color:#111">微信</div>
<svg class="a" style="left:1204px;top:991px;" width="24" height="6" viewBox="0 0 24 6"><circle cx="2.5" cy="3" r="2.3" fill="#ff8c46"/><circle cx="11.5" cy="3" r="2.3" fill="#ff8c46"/><circle cx="20.5" cy="3" r="2.3" fill="#ff8c46"/></svg>
<div class="a" style="left:770px;top:1027px;width:470px;height:2px;background:#dcdcdc"></div>
<div class="a" style="left:1300px;top:986px;font-size:24px;line-height:24px;color:#111;letter-spacing:0.6px;width:200px;text-align:right">3000.00</div>
<div class="a" style="left:1300px;top:1027px;width:220px;height:2px;background:#dcdcdc"></div>
<div class="a" style="left:63px;top:1065px;font-size:24px;line-height:24px;color:#333">结算方式</div>
<div class="a" style="left:169px;top:1065px;font-size:24px;line-height:24px;color:#111">现金</div>
<svg class="a" style="left:587px;top:1066px;" width="26" height="15" viewBox="0 0 26 15"><path d="M1.6 1.8L12.6 12.6L23.6 1.8" stroke="#ff8c46" stroke-width="2.5" fill="none"/></svg>
<div class="a" style="left:168px;top:1107px;width:456px;height:2px;background:#dcdcdc"></div>
<div class="a" style="left:665px;top:1065px;font-size:24px;line-height:24px;color:#333">收款账号</div>
<div class="a" style="left:771px;top:1065px;font-size:24px;line-height:24px;color:#bdbdbd">账号</div>
<svg class="a" style="left:1204px;top:1071px;" width="24" height="6" viewBox="0 0 24 6"><circle cx="2.5" cy="3" r="2.3" fill="#ff8c46"/><circle cx="11.5" cy="3" r="2.3" fill="#ff8c46"/><circle cx="20.5" cy="3" r="2.3" fill="#ff8c46"/></svg>
<div class="a" style="left:770px;top:1107px;width:470px;height:2px;background:#dcdcdc"></div>
<div class="a" style="left:1300px;top:1066px;font-size:24px;line-height:24px;color:#111;letter-spacing:0.6px;width:200px;text-align:right">430.00</div>
<div class="a" style="left:1300px;top:1107px;width:220px;height:2px;background:#dcdcdc"></div>
<svg class="a" style="left:1568px;top:993px;" width="24" height="24" viewBox="0 0 24 24"><circle cx="12" cy="12" r="12" fill="#ff8c46"/><path d="M12 6.5V17.5M6.5 12H17.5" stroke="#fff" stroke-width="2.4"/></svg>
<div class="a" style="left:1601px;top:993px;font-size:24px;line-height:24px;color:#ff8c46">添加</div>
<svg class="a" style="left:1569px;top:1064px;" width="22" height="26" viewBox="0 0 22 26"><g stroke="#222" stroke-width="1.9" fill="none" stroke-linecap="round"><path d="M1.5 6.9H20.5"/><path d="M7.9 6.9V4.2A2 2 0 0 1 9.9 2.2H12.6A2 2 0 0 1 14.6 4.2V6.9"/><path d="M3.45 10.3V20.5A3.25 3.25 0 0 0 6.7 23.75H15.5A3.25 3.25 0 0 0 18.75 20.5V10.3"/><path d="M8 13.9V19.1M14 13.9V19.1"/></g></svg>
<div class="a" style="left:1314px;top:1142px;font-size:24px;line-height:24px;color:#333">收款金额<span class="cl">:</span></div>
<div class="a" style="left:1433px;top:1133px;font-size:32px;line-height:32px;color:#333;letter-spacing:0.9px">3000.00</div>
<div class="a" style="left:1884px;top:752px;width:446px;height:428px;background:#f0f0f0"></div>
<div class="a" style="left:1925px;top:938px;font-size:28px;line-height:28px;color:#333">成交金额</div>
<div class="a" style="left:2076px;top:935px;font-size:36px;line-height:36px;color:#333;letter-spacing:1px">3430.00</div>
<div class="a" style="left:1925px;top:991px;font-size:28px;line-height:28px;color:#333">本单欠款</div>
<div class="a" style="left:2076px;top:988px;font-size:36px;line-height:36px;color:#f5222d;letter-spacing:1px">0.00</div>
<div class="a" style="left:2370px;top:86px;width:41px;height:1094px;background:#ececec"></div>
<div class="a" style="left:2411px;top:86px;width:1px;height:1094px;background:#e2e2e2"></div>
<div class="a" style="left:2412px;top:86px;width:26px;height:1192px;background:#f7f7f7"></div>
<div class="a" style="left:2417px;top:834px;width:17px;height:310px;background:#c6c6c6;border-radius:9px"></div>
<div class="a" style="left:2350px;top:326px;width:20px;height:508px;background:linear-gradient(90deg,rgba(0,0,0,0),rgba(0,0,0,0.05))"></div>
<div class="a" style="left:2370px;top:326px;width:68px;height:435px;background:#fff"></div>
<div class="a" style="left:2370px;top:399px;width:68px;height:2px;background:#dddddd"></div>
<div class="a" style="left:2370px;top:760px;width:68px;height:1px;background:#dddddd"></div>
<div class="a" style="left:2370px;top:761px;width:68px;height:73px;background:#1db4a9"></div>
<svg class="a" style="left:2391px;top:342px;" width="31" height="32" viewBox="0 0 31 32"><g stroke="#666" stroke-width="2.2" fill="none" stroke-linecap="round" stroke-linejoin="round"><path d="M22 30.5H5A4 4 0 0 1 1 26.5V5A4 4 0 0 1 5 1H24.9A4 4 0 0 1 28.9 5V22.2Z"/><path d="M22 30.3V25A2.8 2.8 0 0 1 24.8 22.2H28.7"/><path d="M7.9 7.9H21M7.9 13.3H18.2M7.9 18.4H21" stroke-width="2.4"/></g></svg>
<svg class="a" style="left:2391px;top:416px;" width="32" height="32" viewBox="0 0 32 32"><g stroke="#666" stroke-width="2.2" fill="none" stroke-linecap="round" stroke-linejoin="round" stroke-width="2.4"><path d="M25.48 13.15A6.6 6.6 0 0 0 15.72 4.25L3.32 17.85A6.6 6.6 0 0 0 13.08 26.75L18.47 20.84A3.2 3.2 0 0 0 13.74 16.53L9.02 21.7"/></g></svg>
<svg class="a" style="left:2390px;top:488px;" width="32" height="32" viewBox="0 0 32 32"><g stroke="#666" stroke-width="2.2" fill="none" stroke-linecap="round" stroke-linejoin="round" stroke-width="2.3"><path d="M25.1 27.6A15 15 0 1 1 29.4 22.4"/><path d="M24 13.4H8.4L13.3 9.2M8.4 18.6H24L19 23"/></g></svg>
<svg class="a" style="left:2390px;top:560px;" width="32" height="32" viewBox="0 0 32 32"><g stroke="#666" stroke-width="2.2" fill="none" stroke-linecap="round" stroke-linejoin="round" stroke-width="2.3"><circle cx="16" cy="15.8" r="14.6"/><path d="M12.7 7L8.9 14.5M12 10.8H23L21.1 15M16 14C14.5 19.5 11.5 22.5 8.4 24.4M16 17.4C17.5 21 20.5 23 23.5 24"/></g></svg>
<svg class="a" style="left:2391px;top:632px;" width="30" height="32" viewBox="0 0 30 32"><g stroke="#666" stroke-width="2.2" fill="none" stroke-linecap="round" stroke-linejoin="round"><path d="M5 1.5H25A3.5 3.5 0 0 1 28.5 5V11A5 5 0 0 0 28.5 21V27A3.5 3.5 0 0 1 25 30.5H5A3.5 3.5 0 0 1 1.5 27V21A5 5 0 0 0 1.5 11V5A3.5 3.5 0 0 1 5 1.5Z"/><path d="M10 8L15 14L20 8M15 14V25M9.5 15H20.5M9.5 20H20.5"/></g></svg>
<svg class="a" style="left:2390px;top:703px;" width="32" height="33" viewBox="0 0 32 33"><g stroke="#666" stroke-width="2.2" fill="none" stroke-linecap="round" stroke-linejoin="round"><path d="M16 2L20.2 11.2L30 12.3L22.8 19L24.8 29L16 24L7.2 29L9.2 19L2 12.3L11.8 11.2Z"/></g></svg>
<svg class="a" style="left:2390px;top:778px;" width="33" height="33" viewBox="0 0 33 33"><g stroke="#fff" stroke-width="2.6" fill="none" stroke-linecap="round" stroke-linejoin="round"><path d="M2 12V4A2 2 0 0 1 4 2H12"/><path d="M21 31H29A2 2 0 0 0 31 29V21"/><path d="M19 14L31 2M22 2H31V11"/><path d="M14 19L2 31M2 22V31H11"/></g></svg>
<div class="a" style="left:0px;top:1164px;width:2400px;height:16px;background:linear-gradient(180deg,rgba(0,0,0,0),rgba(0,0,0,0.085))"></div>
<div class="a" style="left:0px;top:1180px;width:2400px;height:98px;background:#fff"></div>
<div class="a" style="left:2400px;top:1180px;width:38px;height:98px;background:linear-gradient(90deg,#e0e0e0,#f3f3f3)"></div>
<svg class="a" style="left:1032px;top:1224px;" width="28" height="28" viewBox="0 0 28 28"><circle cx="14.0" cy="14.0" r="13.3" stroke="#a8a8a8" stroke-width="1.4" fill="none"/><g stroke="#a8a8a8" stroke-width="1.3" fill="none"><path d="M7.3 15.5V10.5A1.5 1.5 0 0 1 8.8 9H21A1.5 1.5 0 0 1 22.5 10.5V19.5A1.5 1.5 0 0 1 21 21H8.8A1.5 1.5 0 0 1 7.3 19.5V18"/><path d="M10.6 12.5V9.5A4.2 4.2 0 0 1 19 9.5V12.5"/></g></svg>
<div class="a" style="left:1067px;top:1224px;font-size:26px;line-height:26px;color:#111">商品种类<span class="cl">:</span></div>
<div class="a" style="left:1196px;top:1223px;font-size:30px;line-height:30px;color:#ff8c46">4</div>
<div class="a" style="left:1223px;top:1224px;font-size:26px;line-height:26px;color:#555">种</div>
<div class="a" style="left:1340px;top:1220px;width:28px;height:28px;background:#ff8c46;border-radius:5px"></div>
<svg class="a" style="left:1340px;top:1220px;" width="28" height="28" viewBox="0 0 28 28"><path d="M7 14.5L12 19L21 9.5" stroke="#fff" stroke-width="2.8" fill="none" stroke-linecap="round" stroke-linejoin="round"/></svg>
<div class="a" style="left:1377px;top:1223px;font-size:24px;line-height:24px;color:#333">价格跟踪本单</div>
<div class="a" style="left:1633px;top:1196px;width:162px;height:72px;background:#fff;border:2px solid #bdbdbd;border-radius:6px"></div>
<div class="a" style="left:1682px;top:1217px;font-size:32px;line-height:32px;color:#333;-webkit-text-stroke:0.2px #333">放弃</div>
<div class="a" style="left:1820px;top:1196px;width:228px;height:72px;background:#fff;border:2px solid #ff8c46;border-radius:6px"></div>
<div class="a" style="left:1871px;top:1216px;font-size:32px;line-height:32px;color:#ff8c46;-webkit-text-stroke:0.25px #ff8c46">保存草稿</div>
<div class="a" style="left:2072px;top:1194px;width:284px;height:72px;background:#ff8c46;border-radius:6px"></div>
<div class="a" style="left:2167px;top:1213px;font-size:32px;line-height:32px;color:#fff;-webkit-text-stroke:0.6px #fff">保存</div>
<svg class="a" style="left:2240px;top:1225px;" width="21" height="13" viewBox="0 0 21 13"><path d="M1.2 11.8L10.5 2.2L19.8 11.8" stroke="#fff" stroke-width="2" fill="none"/></svg>
</body></html>
